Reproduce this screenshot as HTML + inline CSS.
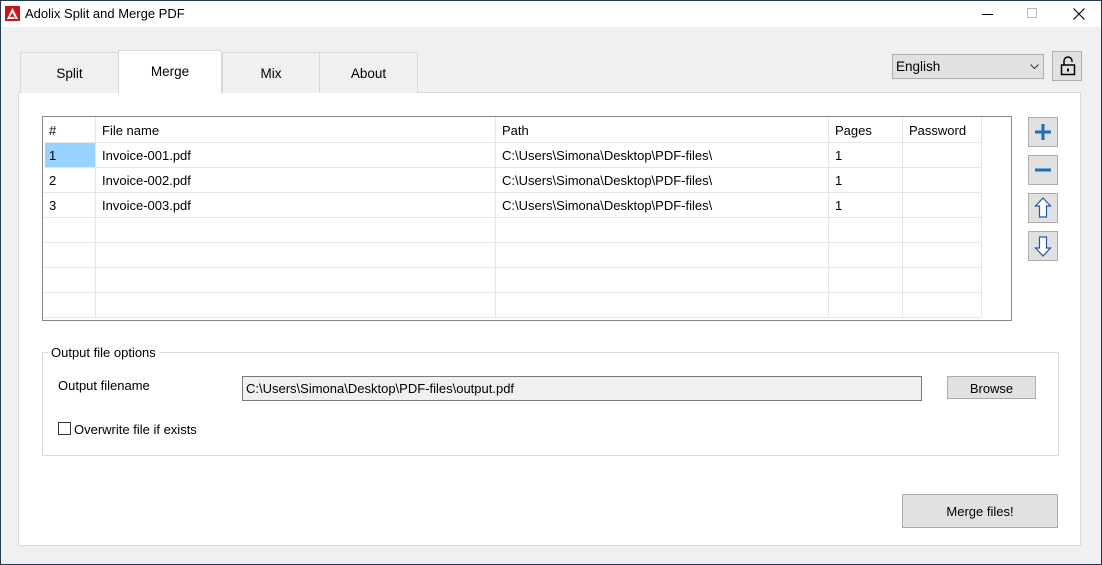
<!DOCTYPE html>
<html><head><meta charset="utf-8"><style>
*{margin:0;padding:0;box-sizing:border-box}
body{width:1102px;height:565px;position:relative;overflow:hidden;background:#f0f0f0;font-family:"Liberation Sans",sans-serif;font-size:13px;color:#000}
.a{position:absolute}
.frame{left:0;top:0;width:1102px;height:565px;border:1px solid #233a57;}
.title{left:1px;top:1px;width:1100px;height:26px;background:#fff}
.tab{position:absolute;background:#f0f0f0;border:1px solid #d9d9d9;border-bottom:none;text-align:center;font-size:13.5px}
.cell{position:absolute;border-right:1px solid #e6e6e6;border-bottom:1px solid #e6e6e6;padding-left:6px;line-height:26px}
.btn{position:absolute;background:#e1e1e1;border:1px solid #adadad;text-align:center}
</style></head><body>
<div class="a frame"></div>
<div class="a title">
 <svg class="a" style="left:4px;top:5px" width="15" height="15" viewBox="0 0 15 15"><rect width="15" height="15" fill="#c8161d"/><path d="M2 13 L7.5 2 L13 13 L10.5 13 L7.5 6.5 L5 11 L9 11 L9.5 13Z" fill="#fff"/></svg>
 <div class="a" style="left:24px;top:5px;font-size:13px">Adolix Split and Merge PDF</div>
 <div class="a" style="left:981px;top:13px;width:11px;height:1px;background:#000"></div>
 <div class="a" style="left:1026px;top:7px;width:10px;height:10px;border:1px solid #bbb"></div>
 <svg class="a" style="left:1072px;top:7px" width="12" height="12"><path d="M0.5 0.5L11.5 11.5M11.5 0.5L0.5 11.5" stroke="#000" stroke-width="1.1"/></svg>
</div>
<div class="a" style="left:18px;top:92px;width:1063px;height:454px;background:#fff;border:1px solid #dadada"></div>
<div class="tab" style="left:20px;top:52px;width:99px;height:41px;line-height:42px">Split</div>
<div class="tab" style="left:222px;top:52px;width:98px;height:41px;line-height:42px">Mix</div>
<div class="tab" style="left:319px;top:52px;width:99px;height:41px;line-height:42px">About</div>
<div class="tab" style="left:118px;top:50px;width:104px;height:44px;background:#fff;line-height:42px">Merge</div>
<div class="a" style="left:892px;top:54px;width:152px;height:25px;background:#e1e1e1;border:1px solid #adadad;padding-left:3px;line-height:24px;font-size:13.5px">English
 <svg class="a" style="left:137px;top:9px" width="9" height="6"><path d="M0.5 0.5L4.5 4.5L8.5 0.5" stroke="#333" fill="none"/></svg></div>
<div class="btn" style="left:1052px;top:51px;width:30px;height:30px">
 <svg class="a" style="left:7px;top:4px" width="16" height="20" viewBox="0 0 16 20"><path d="M4 9V5a4 4 0 0 1 8 0v1" fill="none" stroke="#000" stroke-width="1.5"/><rect x="1.5" y="9" width="13" height="9.5" fill="none" stroke="#000" stroke-width="1.5"/><rect x="7" y="12.5" width="2" height="3" fill="#000"/></svg></div>

<div class="a" style="left:42px;top:116px;width:970px;height:205px;border:1px solid #828790;background:#fff;overflow:hidden">
 <div style="position:relative">
 <div class="cell" style="left:0;top:0;width:53px;height:26px;line-height:27px">#</div>
 <div class="cell" style="left:53px;top:0;width:400px;height:26px;line-height:27px">File name</div>
 <div class="cell" style="left:453px;top:0;width:333px;height:26px;line-height:27px">Path</div>
 <div class="cell" style="left:786px;top:0;width:74px;height:26px;line-height:27px">Pages</div>
 <div class="cell" style="left:860px;top:0;width:79px;height:26px;line-height:27px">Password</div>
 </div>
 <div id="rows" style="position:relative"></div>
</div>
<script>
var r=document.getElementById('rows'),h='';
var d=[["1","Invoice-001.pdf"],["2","Invoice-002.pdf"],["3","Invoice-003.pdf"],["",""],["",""],["",""],["",""]];
for(var i=0;i<7;i++){var t=26+i*25;var p=i<3?"C:\\Users\\Simona\\Desktop\\PDF-files\\":"";var g=i<3?"1":"";
h+='<div class="cell" style="left:0;top:'+t+'px;width:53px;height:25px;'+(i==0?'background:#99d1ff;margin-left:2px;width:51px;padding-left:4px':'')+'">'+d[i][0]+'</div>';
h+='<div class="cell" style="left:53px;top:'+t+'px;width:400px;height:25px">'+d[i][1]+'</div>';
h+='<div class="cell" style="left:453px;top:'+t+'px;width:333px;height:25px">'+p+'</div>';
h+='<div class="cell" style="left:786px;top:'+t+'px;width:74px;height:25px">'+g+'</div>';
h+='<div class="cell" style="left:860px;top:'+t+'px;width:79px;height:25px"></div>';}
r.innerHTML=h;
</script>

<div class="btn" style="left:1028px;top:117px;width:30px;height:30px"><svg class="a" style="left:4px;top:4px" width="20" height="20"><path d="M10 2V18M2 10H18" stroke="#1a6fc0" stroke-width="3"/></svg></div>
<div class="btn" style="left:1028px;top:155px;width:30px;height:30px"><svg class="a" style="left:4px;top:4px" width="20" height="20"><path d="M2 10H18" stroke="#1a6fc0" stroke-width="3"/></svg></div>
<div class="btn" style="left:1028px;top:193px;width:30px;height:30px"><svg class="a" style="left:5px;top:3px" width="18" height="22"><path d="M9 1L16.5 9H12.5V20H5.5V9H1.5Z" fill="#fff" stroke="#2355b0" stroke-width="1.2"/></svg></div>
<div class="btn" style="left:1028px;top:231px;width:30px;height:30px"><svg class="a" style="left:5px;top:3px" width="18" height="22"><path d="M9 21L16.5 13H12.5V2H5.5V13H1.5Z" fill="#fff" stroke="#2355b0" stroke-width="1.2"/></svg></div>

<div class="a" style="left:42px;top:352px;width:1017px;height:104px;border:1px solid #dcdcdc"></div>
<div class="a" style="left:48px;top:345px;background:#fff;padding:0 3px;font-size:13px">Output file options</div>
<div class="a" style="left:58px;top:378px">Output filename</div>
<div class="a" style="left:242px;top:376px;width:680px;height:25px;background:#f0f0f0;border:1px solid #7a7a7a;padding-left:3px;line-height:24px">C:\Users\Simona\Desktop\PDF-files\output.pdf</div>
<div class="btn" style="left:947px;top:376px;width:89px;height:23px;line-height:23px">Browse</div>
<div class="a" style="left:58px;top:422px;width:13px;height:13px;border:1px solid #333;background:#fff"></div>
<div class="a" style="left:74px;top:422px">Overwrite file if exists</div>
<div class="btn" style="left:902px;top:494px;width:156px;height:34px;line-height:34px">Merge files!</div>
</body></html>
